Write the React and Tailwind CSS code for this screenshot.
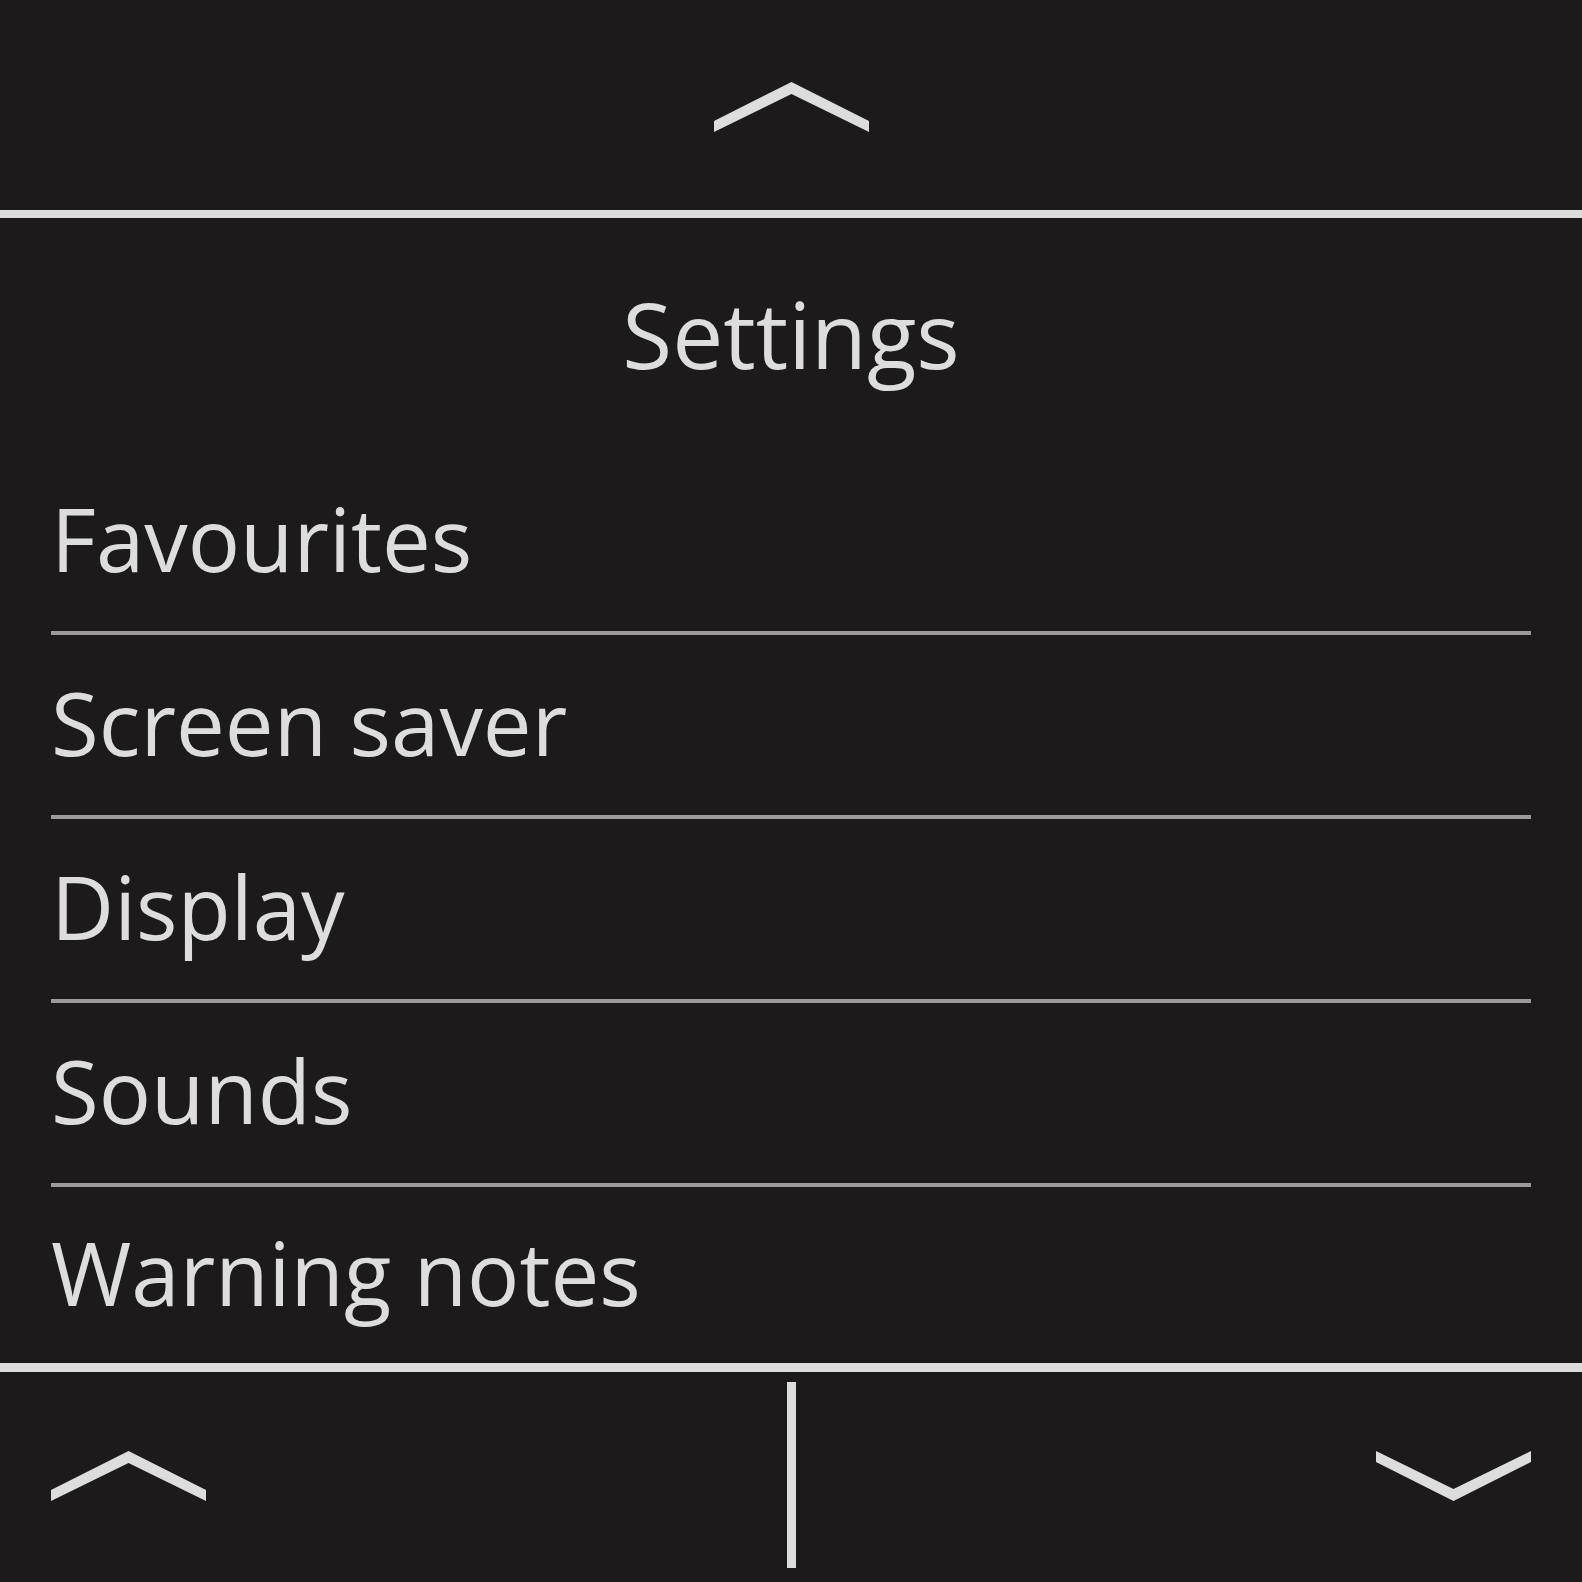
const items = ["Favourites", "Screen saver", "Display", "Sounds", "Warning notes"];

function Chevron({ down = false }) {
  return (
    <svg viewBox="0 0 155 50" className="w-[155px] h-[50px]" fill="#dedddd">
      {down ? (
        <polygon points="0,0 77.5,38 155,0 155,11 77.5,50 0,11" />
      ) : (
        <polygon points="0,39 77.5,0 155,39 155,50 77.5,12 0,50" />
      )}
    </svg>
  );
}

export default function App() {
  return (
    <div className="w-[1582px] h-[1582px] bg-[#1c1a1b] text-[#dedddd] flex flex-col font-['Open_Sans',sans-serif]">
      <div className="h-[210px] flex items-center justify-center pt-[4px]">
        <Chevron />
      </div>
      <div className="h-[8px] bg-[#dcdcdc]" />

      <div className="h-[233px] flex items-center justify-center text-[91px] leading-[124px] pb-[2px]">
        Settings
      </div>

      <div className="px-[51px] flex flex-col">
        {items.map((item, i) => (
          <div key={item}>
            <div
              className={
                i === items.length - 1
                  ? "h-[176px] flex items-center text-[87px] leading-[120px] pb-[6px]"
                  : "h-[180px] flex items-center text-[87px] leading-[120px] pb-[6px]"
              }
            >
              {item}
            </div>
            {i < items.length - 1 && <div className="h-[4px] bg-[#9a9a9a]" />}
          </div>
        ))}
      </div>

      <div className="h-[9px] bg-[#dcdcdc]" />
      <div className="flex-1 flex items-stretch justify-between px-[51px]">
        <div className="flex items-center pb-[2px]">
          <Chevron />
        </div>
        <div className="w-[9px] mt-[10px] mb-[14px] bg-[#dcdcdc]" />
        <div className="flex items-center pb-[2px]">
          <Chevron down />
        </div>
      </div>
    </div>
  );
}
